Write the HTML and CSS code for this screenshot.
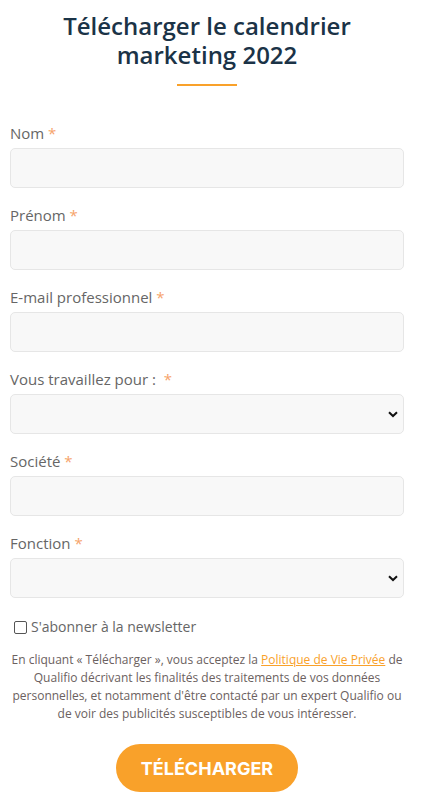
FILE: index.html
```html
<!DOCTYPE html>
<html lang="fr">
<head>
<meta charset="utf-8">
<link rel="stylesheet" href="styles.css">
</head>
<body>
<div class="wrap">
  <h1 class="title">Télécharger le calendrier<br>marketing 2022</h1>
  <div class="bar"></div>
  <form class="form">
    <div class="field"><label class="lbl">Nom <span class="req">*</span></label><input class="inp" type="text"></div>
    <div class="field"><label class="lbl">Prénom <span class="req">*</span></label><input class="inp" type="text"></div>
    <div class="field"><label class="lbl">E-mail professionnel <span class="req">*</span></label><input class="inp" type="text"></div>
    <div class="field"><label class="lbl">Vous travaillez pour : &nbsp;<span class="req">*</span></label>
      <div class="sel"><svg class="chev" width="10" height="7" viewBox="0 0 10 7"><path d="M1 1.2 L5 5 L9 1.2" fill="none" stroke="#111" stroke-width="2"/></svg></div></div>
    <div class="field"><label class="lbl">Société <span class="req">*</span></label><input class="inp" type="text"></div>
    <div class="field"><label class="lbl">Fonction <span class="req">*</span></label>
      <div class="sel"><svg class="chev" width="10" height="7" viewBox="0 0 10 7"><path d="M1 1.2 L5 5 L9 1.2" fill="none" stroke="#111" stroke-width="2"/></svg></div></div>
    <label class="chk"><span class="box"></span>S'abonner à la newsletter</label>
    <p class="legal">En cliquant « Télécharger », vous acceptez la <a class="link" href="#">Politique de Vie Privée</a> de Qualifio décrivant les finalités des traitements de vos données personnelles, et notamment d'être contacté par un expert Qualifio ou de voir des publicités susceptibles de vous intéresser.</p>
    <div class="btnrow"><button class="btn" type="button">TÉLÉCHARGER</button></div>
  </form>
</div>
</body>
</html>
```
FILE: styles.css
```css
* { box-sizing: border-box; }
body { margin: 0; background: #fff; font-family: "Open Sans", sans-serif; }
.wrap { padding: 0 18px 0 10px; }
.title { margin: 0; padding-top: 11px; text-align: center; font-family: "Open Sans", sans-serif; font-weight: 600; font-size: 24px; line-height: 29px; color: #1b3347; }
.bar { width: 60px; height: 2px; background: #f9a12a; margin: 15px auto 0; }
.form { display: flex; flex-direction: column; margin-top: 37px; }
.field { display: flex; flex-direction: column; gap: 5px; margin-bottom: 17px; }
.lbl { font-size: 15px; line-height: 20px; color: #666; }
.req { color: #f6a36a; }
.inp, .sel { height: 40px; width: 100%; border: 1px solid #e6e6e6; border-radius: 5px; background: #f8f8f8; }
.sel { display: flex; align-items: center; justify-content: flex-end; padding-right: 5px; }
.chk { display: flex; align-items: center; gap: 4px; font-size: 14px; color: #666; margin: 2px 0 0 4px; line-height: 20px; }
.box { width: 13px; height: 13px; border: 1px solid #555; border-radius: 2px; }
.legal { margin: 14px 0 0; text-align: center; font-size: 12px; line-height: 18px; color: #6b6160; }
.link { color: #f9a12a; }
.btnrow { display: flex; justify-content: center; margin-top: 21px; }
.btn { width: 182px; height: 48px; border: 0; border-radius: 24px; background: #f9a12a; color: #fff; font-family: Inter, sans-serif; font-weight: 700; font-size: 18px; }
```
